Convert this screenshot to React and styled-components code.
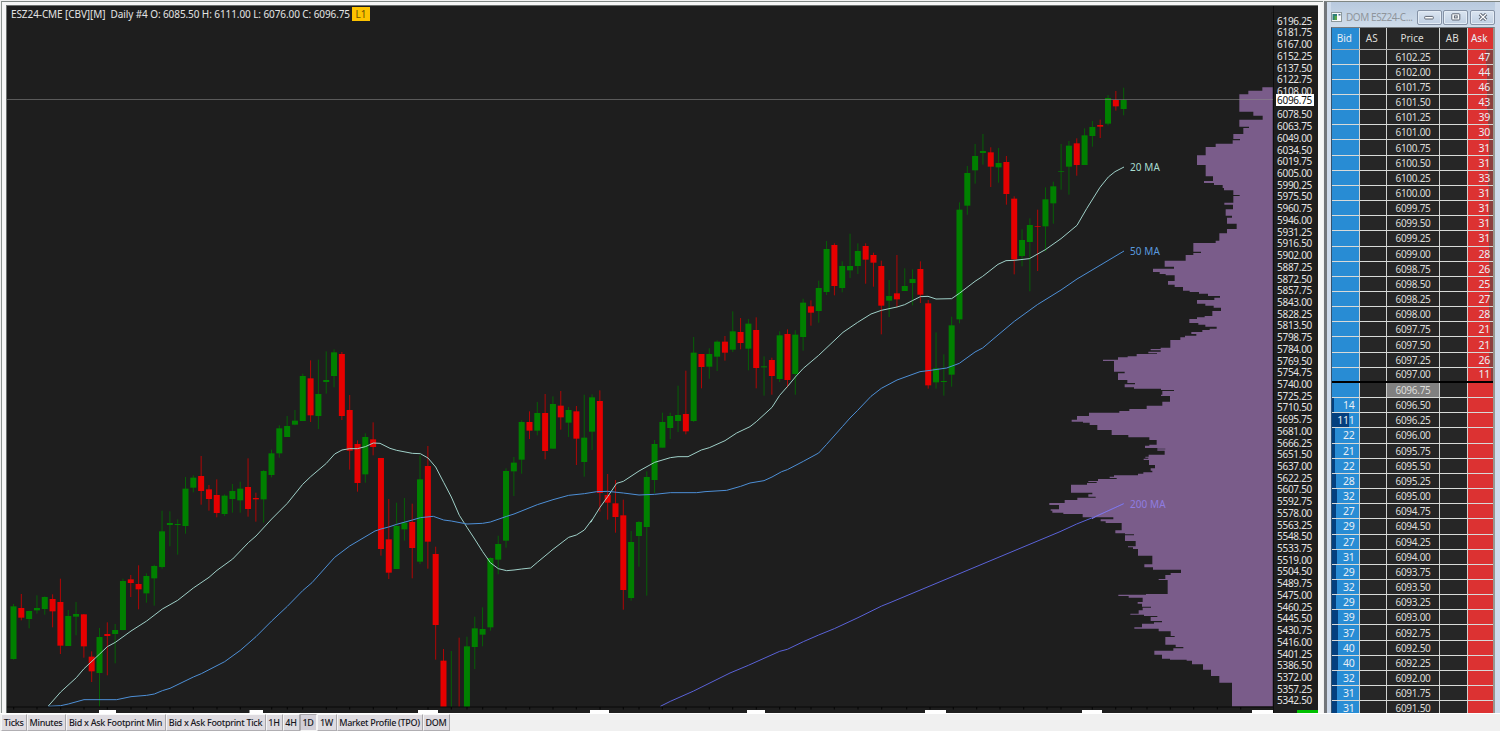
import React from "react";
import styled, { createGlobalStyle, css } from "styled-components";

// ----------------------------------------------------
// 1. Data
// ----------------------------------------------------
const UP = "g";
const DOWN = "r";

// every bar is [colour, high, body top, body bottom, low], in thirds of a pixel below the group's base
const barGroups = [
  {
    base: 330,
    bars: [
      [UP, 822, 829, 987, 989], [DOWN, 792, 834, 863, 871], [UP, 842, 843, 867, 895], [UP, 796, 834, 841, 851],
      [UP, 799, 801, 837, 854], [DOWN, 793, 807, 844, 892], [DOWN, 746, 816, 947, 972], [UP, 840, 858, 948, 948],
      [UP, 816, 852, 860, 916], [DOWN, 852, 853, 949, 983], [DOWN, 964, 980, 1024, 1056], [UP, 894, 921, 1029, 1130],
      [DOWN, 877, 912, 918, 1036], [UP, 882, 900, 912, 1000], [UP, 746, 753, 900, 901], [DOWN, 735, 748, 759, 801],
      [DOWN, 706, 762, 778, 838], [UP, 730, 738, 790, 818], [UP, 704, 708, 745, 827], [UP, 542, 604, 711, 716],
      [UP, 544, 579, 585, 649], [UP, 568, 582, 585, 674], [UP, 441, 476, 588, 611], [UP, 436, 443, 473, 487],
      [DOWN, 378, 438, 483, 524], [DOWN, 465, 478, 507, 542], [DOWN, 448, 495, 549, 562], [UP, 493, 497, 552, 558],
      [UP, 462, 483, 507, 548], [UP, 455, 476, 511, 548], [DOWN, 385, 471, 537, 560], [DOWN, 488, 504, 508, 575],
      [UP, 420, 423, 508, 578], [UP, 359, 370, 435, 442], [UP, 286, 295, 370, 383], [UP, 258, 288, 321, 321],
      [UP, 240, 272, 284, 286], [UP, 131, 138, 273, 273], [DOWN, 91, 145, 256, 276], [UP, 89, 192, 258, 297],
      [UP, 64, 150, 156, 191], [UP, 58, 67, 138, 172], [DOWN, 66, 72, 258, 270], [DOWN, 195, 240, 362, 419],
      [DOWN, 331, 342, 459, 485], [UP, 310, 321, 433, 458], [DOWN, 277, 328, 351, 376], [DOWN, 384, 384, 657, 677],
      [DOWN, 507, 628, 728, 747], [UP, 518, 588, 717, 717], [UP, 504, 578, 598, 632], [DOWN, 521, 576, 654, 745],
      [UP, 377, 448, 695, 702], [DOWN, 348, 408, 635, 716], [DOWN, 650, 672, 885, 989], [DOWN, 957, 992, 1131, 1131],
      [UP, 963, 1131, 1131, 1131], [DOWN, 923, 1131, 1131, 1131], [UP, 920, 949, 1131, 1131], [UP, 860, 895, 951, 1017],
      [UP, 832, 897, 914, 949], [UP, 682, 684, 892, 902], [UP, 617, 642, 689, 733], [UP, 415, 423, 632, 653],
      [UP, 381, 398, 424, 498], [UP, 271, 276, 389, 431], [DOWN, 244, 276, 302, 327], [UP, 216, 249, 302, 316],
      [DOWN, 192, 249, 363, 388], [UP, 199, 222, 356, 356], [DOWN, 183, 227, 262, 299], [UP, 231, 240, 278, 321],
      [DOWN, 228, 244, 326, 405], [UP, 194, 323, 396, 440], [UP, 193, 202, 305, 360],
    ],
  },
  {
    base: 280,
    bars: [
      [DOWN, 331, 363, 639, 695], [DOWN, 582, 645, 668, 719], [DOWN, 600, 670, 711, 758], [DOWN, 659, 706, 930, 989],
      [UP, 753, 786, 954, 962], [UP, 723, 726, 768, 860], [UP, 574, 591, 741, 947], [UP, 480, 492, 600, 639],
      [UP, 398, 426, 503, 503], [UP, 398, 408, 444, 477], [UP, 317, 405, 423, 456], [DOWN, 272, 402, 454, 463],
      [UP, 171, 218, 423, 426], [DOWN, 222, 222, 261, 325], [UP, 205, 222, 260, 296], [UP, 181, 185, 230, 273],
      [DOWN, 168, 185, 218, 242], [UP, 94, 154, 209, 216], [DOWN, 114, 156, 189, 208], [UP, 117, 131, 206, 271],
      [DOWN, 112, 150, 264, 325], [UP, 229, 259, 262, 347], [DOWN, 233, 240, 288, 344], [UP, 154, 166, 297, 306],
      [DOWN, 148, 162, 300, 322], [UP, 151, 164, 282, 344], [UP, 56, 68, 171, 212], [DOWN, 61, 79, 98, 137],
      [UP, 2, 24, 93, 128],
    ],
  },
  {
    base: 80,
    bars: [
      [UP, 483, 507, 636, 645], [DOWN, 490, 495, 618, 646], [UP, 544, 558, 624, 637], [UP, 461, 558, 571, 594],
      [UP, 490, 513, 558, 582], [DOWN, 490, 498, 539, 611], [DOWN, 518, 525, 548, 620], [DOWN, 542, 558, 677, 763],
      [UP, 600, 648, 662, 711], [DOWN, 525, 640, 658, 682], [UP, 565, 618, 633, 633], [UP, 568, 597, 609, 676],
      [DOWN, 544, 567, 644, 669], [DOWN, 660, 670, 916, 926], [UP, 757, 865, 907, 926], [UP, 823, 903, 906, 947],
      [UP, 710, 736, 884, 920], [UP, 367, 389, 718, 730], [UP, 258, 279, 377, 404], [UP, 192, 228, 271, 311],
      [UP, 162, 213, 219, 254], [DOWN, 202, 217, 260, 321], [UP, 204, 249, 262, 308], [DOWN, 228, 246, 342, 374],
      [DOWN, 349, 356, 538, 583], [UP, 448, 480, 528, 559], [UP, 415, 435, 486, 634], [DOWN, 389, 438, 440, 573],
      [UP, 322, 358, 439, 514], [UP, 305, 319, 370, 431], [UP, 192, 273, 275, 329], [UP, 183, 197, 260, 344],
      [DOWN, 175, 190, 255, 287], [UP, 145, 166, 255, 255], [UP, 123, 141, 168, 200], [DOWN, 119, 135, 140, 174],
      [UP, 45, 54, 131, 136], [DOWN, 33, 60, 79, 92], [UP, 23, 60, 87, 106],
    ],
  },
];

const candles = barGroups
  .flatMap(({ base, bars }) =>
    bars.map(([dir, ...ys]) => [dir, ...ys.map((y) => base + y / 3)])
  )
  .map(([dir, high, top, bottom, low], i) => ({
    x: 13.5 + i * 7.818,
    dir,
    high,
    top,
    bottom,
    low,
  }));

// moving averages, piecewise: [origin x, origin y, points in thirds of a pixel]
const ma20 = [
  [0, 330, "145,1128 182,1086 229,1043 252,1016 299,972 322,950 346,937 393,903 440,873 487,837 533,811 580,774 627,742 651,721 698,687 745,638 768,618 815,567 862,520 908,463"],
  [300, 330, "32,440 79,400 104,372 126,360 149,356 172,356 196,350 220,339 240,340 270,355 290,361 337,370 361,371 384,384 407,411 431,457 454,501 478,556 501,592 524,627 548,665 571,698 595,716 620,722 642,720 665,717 692,714 712,697 759,658 806,622 829,615 853,600 876,569"],
  [590, 280, "2,727 30,682 53,650 80,610 100,604 147,573 194,547 241,533 264,530 294,530 334,510 358,503 405,482 440,459 480,440 499,425 546,382 569,346 592,320 616,291 640,265 686,226"],
  [800, 80, "129,757 173,727 213,702 244,691 291,681 314,674 337,662 361,650 384,649 408,657 455,656 478,640 525,604 548,589 594,553 618,542 643,541 688,536 736,509 783,476 831,436 860,386 900,322 925,291 945,275 972,261"],
];
const ma50 = [
  [0, 330, "145,1129 182,1127 205,1122 252,1109 350,1109 393,1100 440,1096 463,1092 487,1082 510,1075 580,1041 604,1031 674,995 721,961 768,920 815,873 862,829 908,782"],
  [300, 330, "36,758 104,682 149,648 225,603 243,597 266,591 290,583 337,570 361,563 400,559 431,570 454,573 501,582 548,580 571,576 620,559 642,552 712,524 759,509 806,496 853,491"],
  [590, 280, "20,635 53,634 100,639 147,645 194,643 241,638 320,638 345,635 410,631 452,619 480,609 522,602 546,591 575,575 592,569 640,544 686,519 709,494 757,440 780,414"],
  [800, 80, "173,991 213,949 244,925 291,900 360,875 384,872 440,864 478,850 525,816 548,804 594,765 643,724 712,674 783,630 831,597 900,556 972,513"],
];
const ma200 = [
  [590, 280, "211,1279 241,1264 311,1233 420,1179 475,1156 569,1114 592,1108 640,1085 686,1065 733,1046 804,1013 875,978 900,968"],
  [1040, 380, "0,480 60,455 110,432 170,408 251,371"],
];

const toPoints = (pieces) =>
  pieces
    .map(([ox, oy, points]) =>
      points
        .split(" ")
        .map((p) => p.split(",").map(Number))
        .map(([x, y]) => `${(ox + x / 3).toFixed(2)},${(oy + y / 3).toFixed(2)}`)
        .join(" ")
    )
    .join(" ");

// volume profile steps: "y:left edge", thirds of a pixel from x 1040
const profilePieces = [
  [70, "52:667 62:625 73:598 125:640 137:668 149:598 170:627 174:610 192:580 207:600 211:578 221:527 231:497 256:471 285:497 319:519 333:492 339:522 345:548 354:552 361:580 375:599 378:580 398:553 404:579 418:557 437:576 443:561 461:590 477:561 490:538 512:527 519:460 545:483 549:460 555:437 572:374 590:402 596:339 606:359 612:377 616:404 633:384 644:404 651:429 662:449 666:477 671:504 678:540 683:523 690:471 701:496 707:521 713:543 723:517 738:494 742:471 747:448 759:475 764:496 770:530 776:509 780:487 786:454 792:469 797:435 802:421 810:391 833:362 837:332 841:362 845:325 850:351 852:290 859:263 862:234 869:189 873:222 905:254 910:234"],
  [380, "0:262 9:285 13:254 22:282 26:363 30:402 33:367 44:363 48:390 65:367 77:320 87:268 93:238 98:147 108:111 119:95 125:129 128:149 135:172 150:215 165:265 172:328 180:350 194:328 197:315 204:352 206:376 208:352 212:374 224:326 230:316 233:325 236:311 240:327 255:345 265:332 272:337 277:310 281:294 286:222 290:209 294:230 297:174 303:145 306:170 309:141 314:93 338:157 343:145 350:167 353:112 360:74 369:28 375:57 388:32 392:37 398:70 402:128 412:220 418:182 424:197 429:245 451:226 460:255 463:282 466:255 483:287 499:264 502:279 507:294 527:337 553:313 562:339 569:423 579:392 585:376 597:356 600:383 642:318 644:235 648:266 653:308 666:293 671:306 680:333 683:308 691:296 701:271 704:312 708:352 711:332 723:366 727:342 731:306 742:283 746:356 754:392 768:404 771:376 794:407 801:430 805:400 812:343 824:366 836:390 839:440 842:456 853:489 869:513 888:538 908:576"],
];

const profilePath = () => {
  const steps = profilePieces.flatMap(([oy, list]) =>
    list.split(" ").map((s) => {
      const [y, x] = s.split(":").map(Number);
      return [1040 + x / 3, oy + y / 3];
    })
  );
  let d = `M1272.7 ${steps[0][1].toFixed(2)}`;
  // each step's vertical edge runs down to where the next one starts
  steps.forEach(([x, y]) => {
    d += `V${y.toFixed(2)}H${x.toFixed(2)}`;
  });
  return `${d}V706.5H1272.7Z`;
};

const ticks = [
  [0, [41, 111, 182, 252, 322, 393, 440, 510, 580, 651, 721, 815, 862, 908]],
  [300, [79, 149, 220, 290, 384, 454, 501, 548, 618, 689, 759, 829]],
  [590, [30, 100, 147, 217, 288, 358, 428, 499, 569, 616, 663, 733, 804, 875]],
  [800, [320, 390, 460, 530, 600, 671, 741]],
  [1040, [63, 157, 227, 274, 321, 391, 461, 532, 602]],
].flatMap(([ox, xs]) => xs.map((x) => ox + x / 3));

const months = [
  [99, 17], [249.5, 13.5], [418, 20], [590, 19], [747, 18], [925, 21], [1082, 20], [1252, 21],
];

const axisPrices = `6196.25 6181.75 6167.00 6152.25 6137.50 6122.75 6108.00 - 6078.50 6063.75 6049.00 6034.50
6019.75 6005.00 5990.25 5975.50 5960.75 5946.00 5931.25 5916.50 5902.00 5887.25 5872.50 5857.75 5843.00 5828.25
5813.50 5798.75 5784.00 5769.50 5754.75 5740.00 5725.25 5710.50 5695.75 5681.00 5666.25 5651.50 5637.00 5622.25
5607.50 5592.75 5578.00 5563.25 5548.50 5533.75 5519.00 5504.50 5489.75 5475.00 5460.25 5445.50 5430.75 5416.00
5401.25 5386.50 5372.00 5357.25 5342.50`.split(/\s+/);

const LAST_PRICE = 6096.75;
const asks = [47, 44, 46, 43, 39, 30, 31, 31, 33, 31, 31, 31, 31, 28, 26, 25, 27, 28, 21, 21, 26, 11];
const bids = [14, 111, 22, 21, 22, 28, 32, 27, 29, 27, 31, 29, 32, 29, 39, 37, 40, 40, 32, 31, 31];

const ladder = Array.from({ length: 44 }, (_, i) => ({
  price: 6102.25 - i * 0.25,
  ask: asks[i],
  bid: bids[i - 23],
}));

const tabs = [
  { label: "Ticks", width: 25.5 },
  { label: "Minutes", width: 39 },
  { label: "Bid x Ask Footprint Min", width: 100 },
  { label: "Bid x Ask Footprint Tick", width: 100 },
  { label: "1H", width: 17 },
  { label: "4H", width: 17 },
  { label: "1D", width: 17 },
  { label: "1W", width: 20 },
  { label: "Market Profile (TPO)", width: 86 },
  { label: "DOM", width: 27 },
];

// ----------------------------------------------------
// 2. Styled components
// ----------------------------------------------------
const GlobalStyle = createGlobalStyle`
  * {
    box-sizing: border-box;
  }
  body {
    margin: 0;
    background: #f0f0f0;
    overflow: hidden;
  }
`;

const Workspace = styled.div`
  display: flex;
  flex-direction: column;
  width: 1500px;
  height: 731px;
  overflow: hidden;
  background: #f0f0f0;
  color: #e4e4e4;
  font-family: "Noto Sans", "Open Sans", sans-serif;
  font-size: 10px;
`;

const Windows = styled.div`
  display: flex;
  height: 714px;
  padding-top: 1px;
  overflow: hidden;
  border-bottom: 1px solid #ffffff;
`;

const ChartWindow = styled.section`
  width: 1322px;
  margin-left: 1px;
  padding: 3px 5px 0 4px;
  border-top: 1px solid #7f8683;
  border-left: 1px solid #8e9592;
  background: #f6f6f6;
`;

const ChartFrame = styled.div`
  position: relative;
  display: flex;
  height: 708px;
  border-top: 1px solid #6c706e;
  border-left: 1px solid #6c706e;
  background: #1e1e1e;
`;

const ChartHeader = styled.header`
  position: absolute;
  top: 0;
  left: 4px;
  display: flex;
  align-items: center;
  height: 15px;
  font-size: 10px;
  letter-spacing: -0.09px;
  white-space: pre;
`;

const Badge = styled.span`
  width: 18px;
  height: 14px;
  margin-left: 2px;
  background: #fcc200;
  color: #6b5200;
  line-height: 14px;
  text-align: center;
`;

const Plot = styled.svg`
  display: block;
  flex: none;
`;

const MaLabel = styled.text`
  fill: ${(p) => p.$color};
  font-size: 10px;
  letter-spacing: 0.08px;
`;

const PriceAxis = styled.div`
  position: relative;
  width: 45px;
  padding-top: 8.7px;
  border-left: 1px solid #0c0c0c;
`;

const AxisPrice = styled.div`
  height: 11.724px;
  padding-left: 3px;
  font-size: 10px;
  line-height: 12px;
  letter-spacing: -0.28px;
`;

const LastPrice = styled.div`
  position: absolute;
  top: 88px;
  left: 2px;
  width: 38px;
  height: 12px;
  padding-left: 1px;
  background: #ffffff;
  color: #111111;
  line-height: 12px;
  letter-spacing: -0.28px;
`;

const LiveMark = styled.div`
  position: absolute;
  right: 0;
  bottom: 0;
  width: 21px;
  height: 3px;
  background: #00c000;
`;

const DomWindow = styled.section`
  width: 176px;
  padding: 0 5px 0 4px;
  border-top: 1px solid #7f8683;
  border-left: 3px solid #73767a;
  background: #cfdbeb;
`;

const Gap = styled.div`
  width: 1px;
  background: #f0f0f0;
`;

const TitleBar = styled.div`
  display: flex;
  align-items: center;
  height: 25px;
  padding: 5px 0 0 0;
  background: linear-gradient(#b8c9de, #cfdcea);
`;

const DomTitle = styled.span`
  flex: 1;
  margin-left: 4px;
  color: #8f959c;
  font-size: 10px;
  letter-spacing: -0.44px;
  white-space: nowrap;
`;

const WindowButton = styled.button`
  display: flex;
  align-items: center;
  justify-content: center;
  flex: none;
  width: 25px;
  height: 15px;
  margin-left: 1.7px;
  padding: 0;
  border: 1px solid #8592a6;
  border-radius: 2px;
  background: linear-gradient(#dbe5f1, #bfcfe2);
  box-shadow: inset 0 0 0 1px #e4ecf5;
`;

const Grid = styled.div`
  width: 164px;
  height: 690px;
  overflow: hidden;
  border-top: 1px solid #767b80;
  border-left: 1px solid #34536e;
  border-right: 2px solid #989690;
  background: #1a1a1a;
`;

const Row = styled.div`
  display: grid;
  grid-template-columns: 27.5px 27.5px 53px 27.5px 1fr;
  grid-template-rows: 100%;
  height: 15.17px;
  border-bottom: 1px solid ${(p) => (p.$spread ? "#000000" : "#d8dad8")};
  ${(p) =>
    p.$spread &&
    css`
      border-bottom-width: 2px;
    `}
`;

const HeaderRow = styled(Row)`
  height: 21.5px;
  border-bottom: 1px solid #b0b0b0;
`;

const fills = { bid: "#288cd4", ask: "#dc3232", price: "#262626", plain: "#262626" };

const Cell = styled.div`
  position: relative;
  display: flex;
  align-items: center;
  justify-content: ${(p) =>
    !p.$head && (p.$kind === "bid" || p.$kind === "ask") ? "flex-end" : "center"};
  padding-top: ${(p) => (p.$head ? "0" : "1px")};
  padding-right: ${(p) => (p.$head ? "2px" : p.$kind === "price" ? "0" : p.$kind === "ask" ? "3px" : "4px")};
  border-right: ${(p) => (p.$kind === "ask" ? "0" : "1px solid #d0d2d0")};
  background: ${(p) => (p.$last ? "#808080" : fills[p.$kind])};
  color: ${(p) => (p.$kind === "price" || p.$kind === "plain" ? "#dededa" : "#e8eef4")};
  font-size: 10px;
  line-height: 13px;
  letter-spacing: ${(p) => (p.$kind === "price" && !p.$head ? "-0.28px" : "0")};
`;

const DepthBar = styled.i`
  position: absolute;
  top: 0;
  bottom: 0;
  ${(p) => (p.$side === "bid" ? "left: 0; background: #04407e;" : "right: 0; background: #8c4040;")}
`;

const Size = styled.span`
  position: relative;
  font-size: 10.5px;
  letter-spacing: -0.25px;
`;

const TabBar = styled.nav`
  display: flex;
  height: 17px;
  padding: 0 0 0 1px;
`;

const Tab = styled.button`
  width: ${(p) => p.$width}px;
  height: 17px;
  padding: 1px 0 0;
  border: 0;
  border-top: 1px solid #f8f8f8;
  border-right: 1px solid #a8a6aa;
  border-bottom: 1px solid #b0aeb2;
  border-left: 1px solid #f4f4f4;
  background: #dedbe0;
  color: #16161c;
  font-family: inherit;
  font-size: 9px;
  font-weight: 500;
  line-height: 14px;
  letter-spacing: -0.3px;
  white-space: nowrap;
  ${(p) =>
    p.$active &&
    css`
      border-color: #a8a6aa #f4f4f4 #f4f4f4 #a8a6aa;
      background: #d2cfd8;
    `}
`;

// ----------------------------------------------------
// 3. Components
// ----------------------------------------------------
const Candle = ({ x, dir, high, top, bottom, low }) => {
  const body = dir === UP ? "#008000" : "#e60000";
  const wick = dir === UP ? "#066006" : "#b00606";
  return (
    <g>
      <rect x={x - 0.5} y={high} width={1} height={low - high} fill={wick} />
      <rect x={x - 3} y={top} width={6} height={bottom - top} fill={body} />
    </g>
  );
};

const Chart = () => (
  <Plot width="1266" height="707" viewBox="7 6 1266 707">
    {candles.map((c) => (
      <Candle key={c.x} {...c} />
    ))}
    <g fill="none" strokeWidth="1">
      <polyline points={toPoints(ma20)} stroke="#9fd0c8" />
      <polyline points={toPoints(ma50)} stroke="#4d8fd6" />
    </g>
    <path d={profilePath()} fill="#7a5c8a" />
    <rect x="7" y="99" width="1266" height="1" fill="#8c8c8c" fillOpacity="0.55" />
    <polyline points={toPoints(ma200)} fill="none" stroke="#5a62d8" strokeWidth="1" />
    <polyline points="1092,518.7 1096.7,516 1123.7,503.7" fill="none" stroke="#8878de" strokeWidth="1" />
    <MaLabel x="1130" y="171" $color="#a8dcd0">20 MA</MaLabel>
    <MaLabel x="1130" y="254.5" $color="#5a9ade">50 MA</MaLabel>
    <MaLabel x="1130" y="507.5" $color="#8f7ce0">200 MA</MaLabel>
    <rect x="7" y="706.5" width="1266" height="1" fill="#080808" />
    {ticks.map((x) => (
      <rect key={x} x={x - 0.5} y="707" width="1" height="2.5" fill="#050505" />
    ))}
    {months.map(([x, w]) => (
      <rect key={x} x={x} y="710" width={w} height="3" fill="#ffffff" />
    ))}
  </Plot>
);

const AppIcon = () => (
  <svg width="11" height="10" viewBox="0 0 11 10">
    <rect x="0.5" y="0.5" width="10" height="9" fill="#f8fafa" stroke="#8c989c" />
    <rect x="1.5" y="2" width="4.5" height="6" fill="#2f7f78" />
    <rect x="3.5" y="4" width="2.5" height="4" fill="#5aa84c" />
    <rect x="7.5" y="2" width="2" height="1.5" fill="#4a6c88" />
  </svg>
);

const MinimizeIcon = () => (
  <svg width="10" height="8" viewBox="0 0 10 8">
    <rect x="0.7" y="3.4" width="8.6" height="2.6" rx="0.8" fill="#fff" stroke="#5c6472" />
  </svg>
);

const MaximizeIcon = () => (
  <svg width="10" height="8" viewBox="0 0 10 8">
    <rect x="0.8" y="0.8" width="8" height="6.2" rx="0.8" fill="#fff" stroke="#5c6472" />
    <rect x="3.4" y="2.9" width="2.8" height="2" fill="#fff" stroke="#5c6472" />
  </svg>
);

const CloseIcon = () => (
  <svg width="10" height="8" viewBox="0 0 10 8">
    <path d="M1.8 1L8.2 7M8.2 1L1.8 7" stroke="#5c6472" strokeWidth="3.2" />
    <path d="M1.8 1L8.2 7M8.2 1L1.8 7" stroke="#fff" strokeWidth="1.2" />
  </svg>
);

const LadderRow = ({ price, bid, ask }) => (
  <Row $spread={price === 6097}>
    <Cell $kind="bid">
      {bid && <DepthBar $side="bid" style={{ width: bid * 0.15 }} />}
      <Size>{bid}</Size>
    </Cell>
    <Cell $kind="plain" />
    <Cell $kind="price" $last={price === LAST_PRICE}>{price.toFixed(2)}</Cell>
    <Cell $kind="plain" />
    <Cell $kind="ask">
      {ask && <DepthBar $side="ask" style={{ width: ask * 0.14 }} />}
      <Size>{ask}</Size>
    </Cell>
  </Row>
);

const App = () => {
  return (
    <Workspace>
      <GlobalStyle />
      <Windows>
        <ChartWindow>
          <ChartFrame>
            <Chart />
            <PriceAxis>
              {axisPrices.map((price, i) => (
                <AxisPrice key={i}>{price === "-" ? "" : price}</AxisPrice>
              ))}
              <LastPrice>{LAST_PRICE}</LastPrice>
              <LiveMark />
            </PriceAxis>
            <ChartHeader>
              {"ESZ24-CME [CBV][M]  Daily #4 O: 6085.50 H: 6111.00 L: 6076.00 C: 6096.75"}
              <Badge>L1</Badge>
            </ChartHeader>
          </ChartFrame>
        </ChartWindow>
        <Gap />
        <DomWindow>
          <TitleBar>
            <AppIcon />
            <DomTitle>DOM ESZ24-C...</DomTitle>
            <WindowButton><MinimizeIcon /></WindowButton>
            <WindowButton><MaximizeIcon /></WindowButton>
            <WindowButton><CloseIcon /></WindowButton>
          </TitleBar>
          <Grid>
            <HeaderRow>
              <Cell $kind="bid" $head>Bid</Cell>
              <Cell $kind="plain" $head>AS</Cell>
              <Cell $kind="price" $head>Price</Cell>
              <Cell $kind="plain" $head>AB</Cell>
              <Cell $kind="ask" $head>Ask</Cell>
            </HeaderRow>
            {ladder.map((row) => (
              <LadderRow key={row.price} {...row} />
            ))}
          </Grid>
        </DomWindow>
      </Windows>
      <TabBar>
        {tabs.map((tab) => (
          <Tab key={tab.label} $width={tab.width} $active={tab.label === "1D"}>
            {tab.label}
          </Tab>
        ))}
      </TabBar>
    </Workspace>
  );
};

export default App;
